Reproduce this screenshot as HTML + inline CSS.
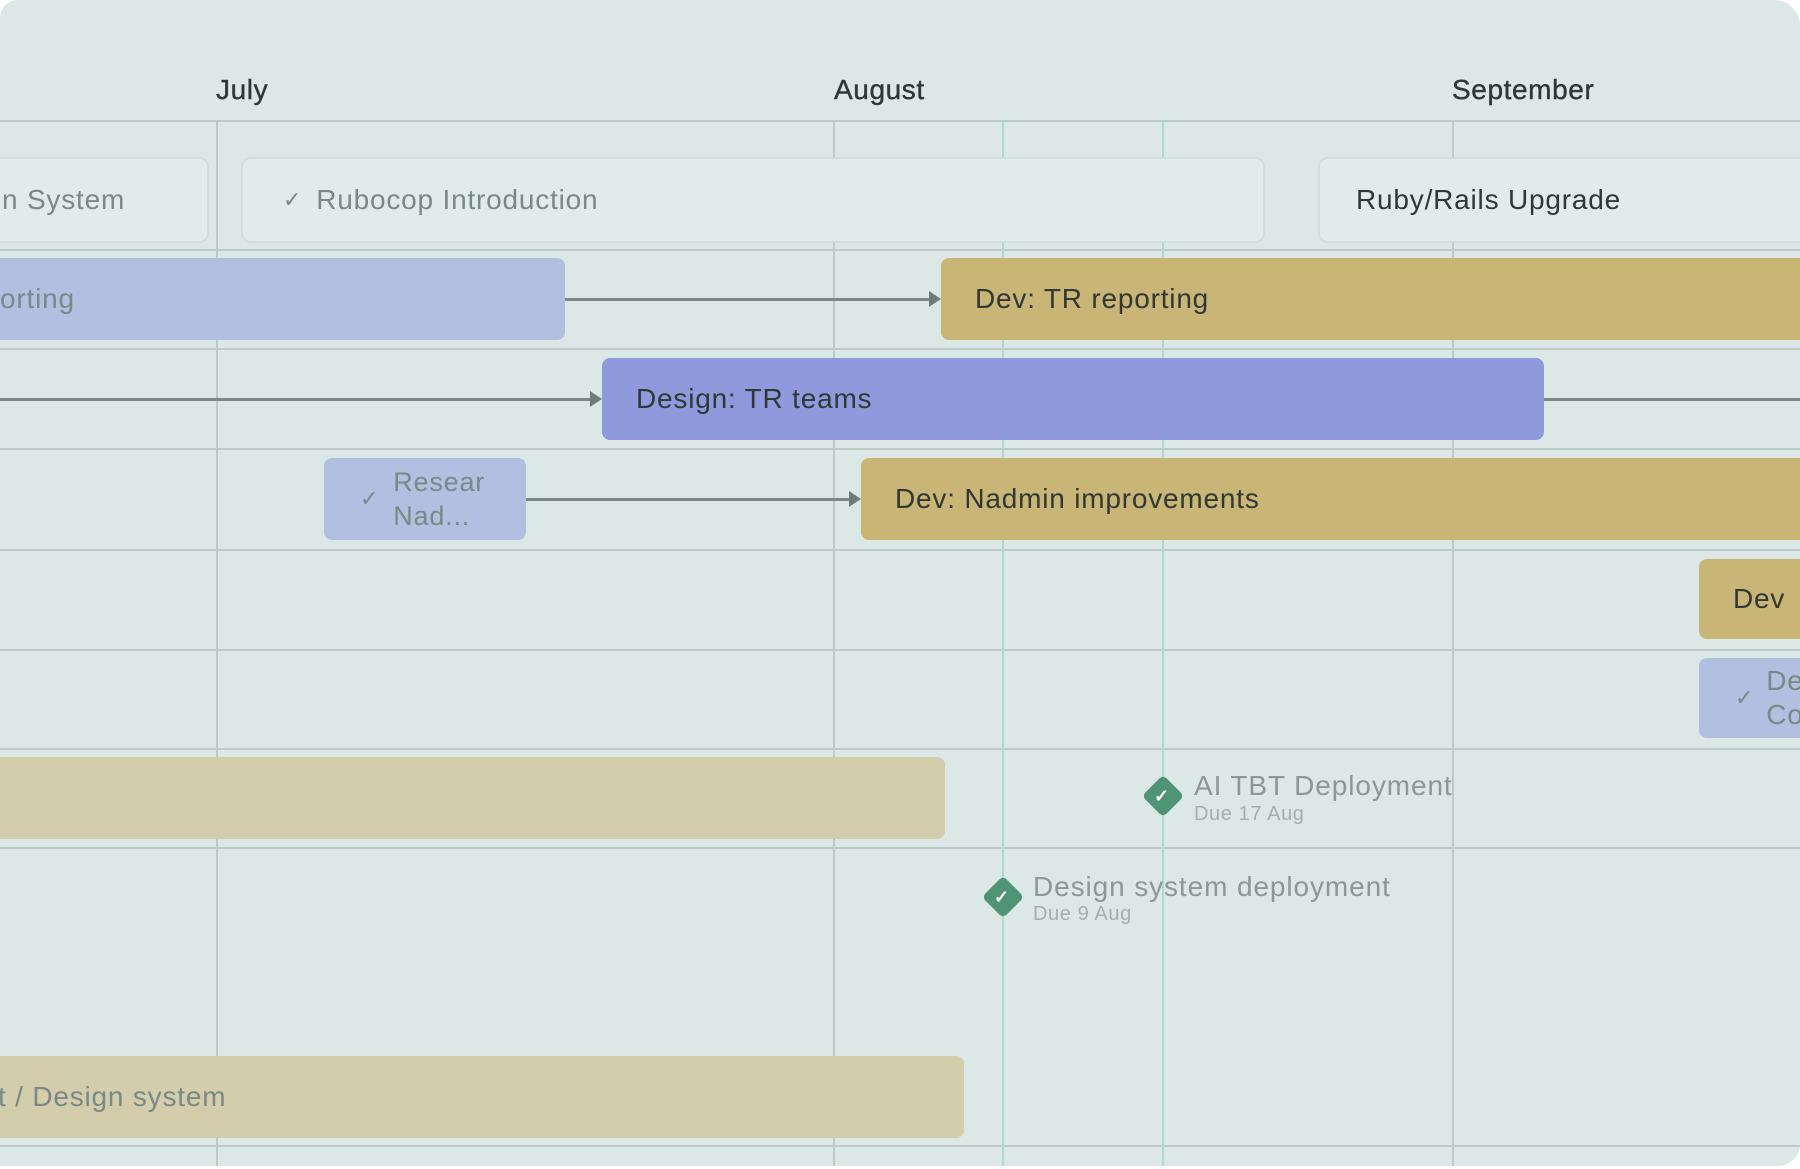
<!DOCTYPE html>
<html><head><meta charset="utf-8"><style>
*{margin:0;padding:0;box-sizing:border-box}
html,body{width:1800px;height:1169px;overflow:hidden;background:#fff;font-family:"Liberation Sans",sans-serif}
#p{position:absolute;left:0;top:0;width:1800px;height:1166px;background:#dbe8e6;border-radius:18px 26px 22px 0;overflow:hidden}
.a{position:absolute}
.h{height:2px;left:0;width:1800px;background:#bccbc8}
.v{width:2px;top:121px;height:1045px;background:#bccbc8}
.t{width:2px;top:121px;height:1045px;background:#b0d9cc}
.m{font-size:28px;color:#2f3835;top:74px;letter-spacing:0.6px;-webkit-text-stroke:0.4px #2f3835}
.bar{border-radius:8px;font-size:28px;display:flex;align-items:center;padding-left:34px;white-space:nowrap;overflow:hidden;letter-spacing:0.8px}
.card{border-radius:10px;border:2px solid #d0dfdc;background:#dfeceb;font-size:28px;display:flex;align-items:center;white-space:nowrap;overflow:hidden;letter-spacing:0.8px}
.line{height:3px;background:#7c8886}
.arr{width:0;height:0;border-top:8px solid transparent;border-bottom:8px solid transparent;border-left:12px solid #6f7b79}
.dia{width:30px;height:30px;background:#4f9474;transform:rotate(45deg);border-radius:5px}
.ms{font-size:28px;color:#8a9896;letter-spacing:0.9px}
.du{font-size:20px;color:#a3b0ae;letter-spacing:0.6px}
</style></head><body><div id="p">
<div class="a m" style="left:216px">July</div>
<div class="a m" style="left:834px">August</div>
<div class="a m" style="left:1452px">September</div>

<div class="a h" style="top:120px"></div>
<div class="a h" style="top:249px"></div>
<div class="a h" style="top:348px"></div>
<div class="a h" style="top:448px"></div>
<div class="a h" style="top:549px"></div>
<div class="a h" style="top:649px"></div>
<div class="a h" style="top:748px"></div>
<div class="a h" style="top:847px"></div>
<div class="a h" style="top:1145px"></div>

<div class="a v" style="left:216px"></div>
<div class="a v" style="left:833px"></div>
<div class="a t" style="left:1002px"></div>
<div class="a t" style="left:1162px"></div>
<div class="a v" style="left:1452px"></div>

<!-- row1 -->
<div class="a card" style="left:-20px;top:157px;width:229px;height:86px;padding-left:20px;color:#7a8886">n System</div>
<div class="a card" style="left:241px;top:157px;width:1024px;height:86px;padding-left:40px;color:#7a8886"><span style="font-size:22px;margin-right:14px">✓</span>Rubocop Introduction</div>
<div class="a card" style="left:1318px;top:157px;width:520px;height:86px;padding-left:36px;color:#2f3835">Ruby/Rails Upgrade</div>

<!-- row2 -->
<div class="a bar" style="left:-20px;top:258px;width:585px;height:82px;background:#b2bfe0;color:#7a8886;padding-left:20px">orting</div>
<div class="a line" style="left:565px;top:298px;width:366px"></div>
<div class="a arr" style="left:929px;top:291px"></div>
<div class="a bar" style="left:941px;top:258px;width:880px;height:82px;background:#c9b575;color:#2f3835">Dev: TR reporting</div>

<!-- row3 -->
<div class="a line" style="left:0;top:398px;width:592px"></div>
<div class="a arr" style="left:590px;top:391px"></div>
<div class="a bar" style="left:602px;top:358px;width:942px;height:82px;background:#8f99dc;color:#2f3835">Design: TR teams</div>
<div class="a line" style="left:1544px;top:398px;width:260px"></div>

<!-- row4 -->
<div class="a bar" style="left:324px;top:458px;width:202px;height:82px;background:#b2bfe0;color:#7a8886;padding-left:36px;font-size:27px;line-height:34px;white-space:normal"><span style="font-size:22px;margin-right:14px">✓</span><span>Resear<br>Nad...</span></div>
<div class="a line" style="left:526px;top:498px;width:325px"></div>
<div class="a arr" style="left:849px;top:491px"></div>
<div class="a bar" style="left:861px;top:458px;width:960px;height:82px;background:#c9b575;color:#2f3835">Dev: Nadmin improvements</div>

<!-- row5/6 -->
<div class="a bar" style="left:1699px;top:559px;width:140px;height:80px;background:#c9b575;color:#2f3835;padding-left:34px">Dev</div>
<div class="a bar" style="left:1699px;top:658px;width:140px;height:80px;background:#b2bfe0;color:#7a8886;padding-left:36px;line-height:34px"><span style="font-size:22px;margin-right:12px">✓</span><span>De<br>Co</span></div>

<!-- row7 -->
<div class="a bar" style="left:-20px;top:757px;width:965px;height:82px;background:#d3cdab"></div>
<div class="a dia" style="left:1148px;top:781px"></div>
<div class="a" style="left:1154px;top:786px;color:#fff;font-size:18px;font-weight:bold">✓</div>
<div class="a ms" style="left:1194px;top:770px">AI TBT Deployment</div>
<div class="a du" style="left:1194px;top:803px">Due 17 Aug</div>

<!-- row8 -->
<div class="a dia" style="left:988px;top:882px"></div>
<div class="a" style="left:994px;top:887px;color:#fff;font-size:18px;font-weight:bold">✓</div>
<div class="a ms" style="left:1033px;top:871px">Design system deployment</div>
<div class="a du" style="left:1033px;top:903px">Due 9 Aug</div>

<!-- bottom -->
<div class="a bar" style="left:-20px;top:1056px;width:984px;height:82px;background:#d3cdab;color:#7a8886;padding-left:18px">t / Design system</div>
</div></body></html>
